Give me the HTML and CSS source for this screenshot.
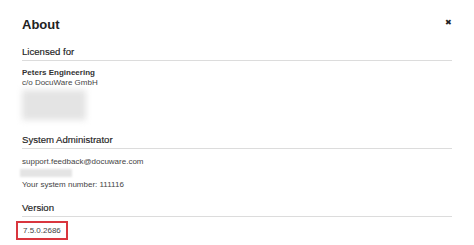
FILE: index.html
```html
<!DOCTYPE html>
<html>
<head>
<meta charset="utf-8">
<link rel="stylesheet" href="styles.css">
</head>
<body>
<div class="dialog">
  <div class="header">
    <h1 class="title">About</h1>
    <span class="close">✖</span>
  </div>
  <section class="section">
    <h2 class="sec-title">Licensed for</h2>
    <div class="sec-body">
      <div class="bold">Peters Engineering</div>
      <div>c/o DocuWare GmbH</div>
      <div class="blur blur-big"></div>
    </div>
  </section>
  <section class="section">
    <h2 class="sec-title">System Administrator</h2>
    <div class="sec-body sec-admin">
      <div>support.feedback@docuware.com</div>
      <div class="blur blur-small"></div>
      <div>Your system number: 111116</div>
    </div>
  </section>
  <section class="section">
    <h2 class="sec-title">Version</h2>
    <div class="sec-body sec-last">
      <span class="version">7.5.0.2686</span>
    </div>
  </section>
</div>
</body>
</html>
```
FILE: styles.css
```css
html, body {
  margin: 0;
  padding: 0;
  background: #ffffff;
}
.dialog {
  width: 474px;
  height: 245px;
  box-sizing: border-box;
  padding: 14px 22px 0 22px;
  font-family: "Liberation Sans", Arial, sans-serif;
  color: #333333;
  font-size: 8px;
  overflow: hidden;
}
.header {
  display: flex;
  justify-content: space-between;
  align-items: flex-start;
  height: 27px;
}
.title {
  margin: 0;
  font-size: 13px;
  font-weight: bold;
  line-height: 22px;
  color: #222222;
}
.close {
  font-size: 8px;
  line-height: 8px;
  margin-top: 5px;
  color: #222222;
}
.sec-title {
  margin: 0;
  font-size: 9.6px;
  font-weight: normal;
  color: #222222;
  -webkit-text-stroke: 0.15px #222222;
  line-height: 14px;
  padding-top: 4px;
  padding-bottom: 1px;
  border-bottom: 1px solid #dcdcdc;
}
.sec-body {
  padding-top: 7px;
  padding-bottom: 6px;
  line-height: 10px;
  color: #444444;
}
.sec-admin {
  padding-top: 8px;
  padding-bottom: 7px;
}
.sec-last {
  padding-top: 4px;
  padding-bottom: 0;
}
.bold {
  font-weight: bold;
  color: #333333;
}
.blur {
  background: #e4e4e4;
}
.blur-big {
  width: 64px;
  height: 30px;
  margin: 2px 0 3px 0;
  filter: blur(3px);
}
.blur-small {
  width: 52px;
  height: 8px;
  margin: 2px 0 3px -2px;
  filter: blur(1px);
}
.version {
  display: inline-block;
  margin-left: -6px;
  padding: 3px 5px 2px 5px;
  border: 2px solid #d9363e;
  line-height: 10px;
}
```
